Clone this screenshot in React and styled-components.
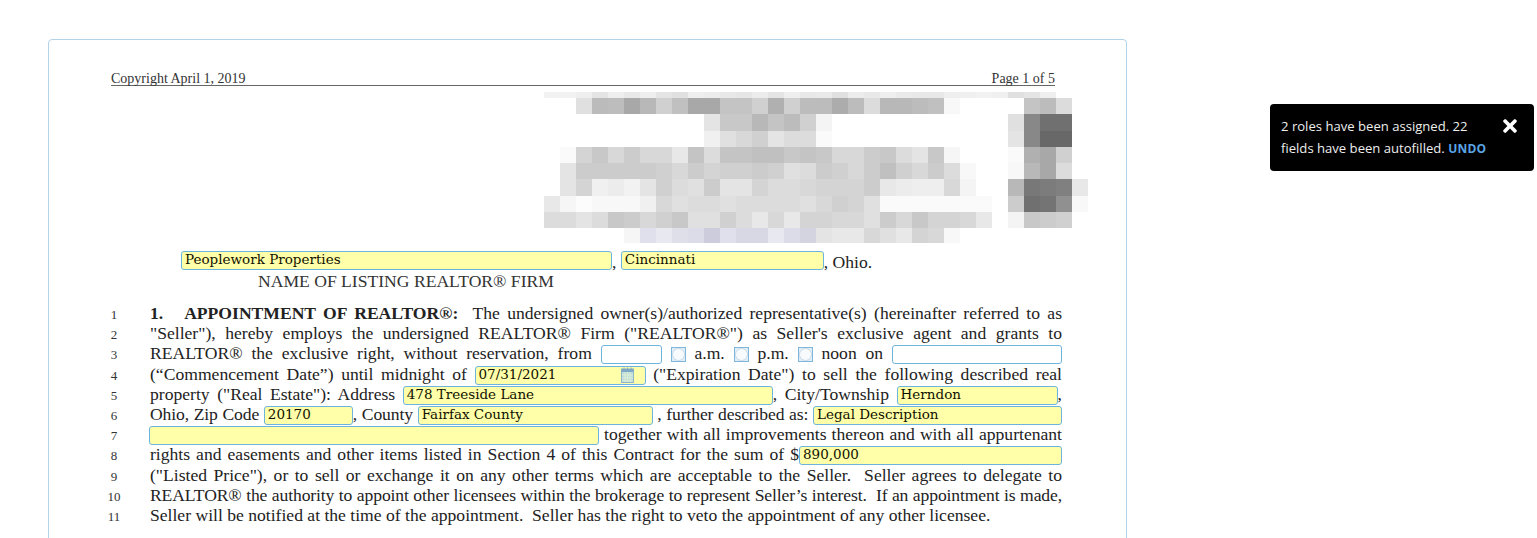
import React from "react";
import styled, { createGlobalStyle } from "styled-components";
import { FaTimes } from "react-icons/fa";

const Global = createGlobalStyle`
  html, body { margin: 0; padding: 0; background: #fff; height: 538px; overflow: hidden; }
`;

const Screen = styled.div`
  height: 538px;
  overflow: hidden;
  padding: 39px 0 0 48px;
  box-sizing: border-box;
  font-family: "Liberation Serif", serif;
  color: #222;
`;

const Sheet = styled.main`
  width: 1079px;
  height: 640px;
  box-sizing: border-box;
  border: 1px solid #b2d2ea;
  border-radius: 4px;
  padding: 28px 0 0 51px;
`;

const RunningHead = styled.header`
  display: flex;
  justify-content: space-between;
  width: 944px;
  height: 17px;
  margin-left: 11px;
  border-bottom: 1px solid #666;
  font-size: 14px;
  line-height: 22px;
  color: #333;
`;

const Mosaic = styled.svg`
  display: block;
  width: 562px;
  height: 159px;
  margin: 6px 0 0 428px;
`;

const FirmLine = styled.div`
  display: flex;
  align-items: flex-start;
  height: 20px;
  margin-left: 81px;
  font-size: 17.6px;
  line-height: 22px;
`;

const FirmCaption = styled.div`
  height: 20px;
  margin: 0 0 13px 158px;
  font-size: 17.6px;
  line-height: 20px;
  color: #333;
`;

const Row = styled.div`
  display: flex;
  height: 20.2px;
`;

const LineNumber = styled.span`
  flex: 0 0 28px;
  margin-right: 22px;
  text-align: center;
  font-size: 13px;
  line-height: 21px;
  color: #333;
`;

const Field = styled.span`
  display: inline-flex;
  align-items: center;
  justify-content: space-between;
  box-sizing: border-box;
  width: ${(p) => p.$w}px;
  height: 19px;
  margin-left: ${(p) => p.$ml || 0}px;
  padding: 0 3px 3px 3px;
  vertical-align: top;
  border: 1px solid #6db4dc;
  border-radius: 3px;
  background: ${(p) => (p.$empty ? "#fff" : "#feffa8")};
  font-family: "DejaVu Serif", serif;
  font-size: 13.5px;
  line-height: 14px;
  letter-spacing: normal;
  word-spacing: normal;
  color: #111100;
  text-align: left;
  text-align-last: left;
  white-space: nowrap;
`;

const RowText = styled.p`
  flex: 0 0 912px;
  width: 912px;
  margin: 0;
  font-size: 17.6px;
  line-height: 19.6px;
  height: 20.2px;
  letter-spacing: ${(p) => (p.$tight ? "-0.12px" : "normal")};
  word-spacing: ${(p) => (p.$tight ? "-1px" : "normal")};
  text-align: ${(p) => (p.$last ? "left" : "justify")};
  text-align-last: ${(p) => (p.$last ? "left" : "justify")};
  ${Field} {
    margin-top: 1px;
  }
`;

const Check = styled.span`
  display: inline-block;
  position: relative;
  box-sizing: border-box;
  width: 15px;
  height: 15px;
  margin-top: 3px;
  vertical-align: top;
  border: 1px solid #7fb6db;
  background: #e2eef7;
  &::after {
    content: "";
    position: absolute;
    inset: 0;
    border-radius: 50%;
    background: #f8fbfd;
    border: 1px solid #c8dae8;
    box-sizing: border-box;
  }
`;

const CalendarGlyph = styled.svg`
  width: 13px;
  height: 16px;
  flex: none;
  margin: 2px 8px 0 0;
`;

const Toast = styled.aside`
  position: fixed;
  top: 104px;
  left: 1270px;
  width: 264px;
  height: 67px;
  box-sizing: border-box;
  padding: 11px 40px 0 11px;
  background: #000;
  border-radius: 4px;
  color: #eee;
  font-family: "Open Sans", sans-serif;
  font-size: 13.1px;
  line-height: 22px;
`;

const Undo = styled.a`
  color: #5aa5e6;
  font-weight: 700;
  font-size: 12px;
  letter-spacing: 0.2px;
`;

const Close = styled.button`
  position: absolute;
  top: 12px;
  right: 14px;
  padding: 0;
  border: 0;
  background: none;
  color: #fff;
  display: flex;
`;

const mosaic = [
  [92, 5.5, 0, ["f2","f2","ee","e4","ee","e8","ee","e4","e0","ee","ec","e8","e6","ec","e4","ee","e8","ea","e0","ec","e8","ee","ea","e8","e8","ee","f0","f2","f0","e0","e4","ee"]],
  [98, 16, 2, ["e0","bb","bd","a8","b8","d0","c0","a8","a8","c4","c4","d0","b0","d0","bc","bc","ac","bc","dc","b8","b8","bc","c0","f8"]],
  [98, 16, 30, ["c4","bc","dc"]],
  [114, 16.5, 10, ["e4","c8","c8","b8","c4","bc","d0","f4"]],
  [114, 16.5, 29, ["e0","88","70","70"]],
  [130.5, 16.5, 10, ["f0","e0","d8","d0","e4","dc","dc","fa"]],
  [130.5, 16.5, 29, ["e4","88","68","68"]],
  [147, 16, 1, ["fa","d4","c8","d8","cc","d8","d8","e8","c4","dc","c4","c4","c0","c0","c8","c4","c8","d8","d8","cc","c8","dc","e4","c8","f6"]],
  [147, 16, 29, ["fa","b0","a8","d0"]],
  [163, 16, 1, ["e4","cc","cc","cc","cc","cc","d0","d8","cc","d4","d0","d0","cc","d0","e0","dc","cc","d0","d8","cc","c0","d0","d8","cc","dc","f8"]],
  [163, 16, 29, ["f8","b8","a8","dc"]],
  [179, 16.5, 1, ["e4","d4","f0","ec","f2","e4","d0","dc","e0","cc","e4","e4","d4","dc","dc","d8","d4","d4","d4","cc","e8","ec","ee","ee","d8","f4"]],
  [179, 16.5, 29, ["b8","78","7c","80","e8"]],
  [195.5, 16.5, 0, ["e8","f6","fc","f8","f8","f8","f0","d8","e0","dc","dc","e0","dc","dc","dc","dc","e0","d8","d0","d4","e0","fa","fa","fa","fa","fa","fa","fa"]],
  [195.5, 16.5, 29, ["cc","70","74","90","f8"]],
  [212, 16, 0, ["dc","dc","e4","dc","c8","cc","d8","d0","c8","e0","e0","d0","dc","e8","d8","e8","d4","d4","d8","d8","e0","cc","d8","c8","d4","d4","d8","e8"]],
  [212, 16, 29, ["f4","c8","cc","d0"]],
  [228, 15, 5, ["f6","e0e0ec","e8e8f0","dfdfe9","dcdce8","ccccdc","e0e0ec","d8d8e4","d8d8e4","e8e8f0","dcdce8","d4d4e0","e4","e8","e8","d8","e0","e8","d4","d8","f8"]],
];

const tone = (v) => (v.length === 2 ? `#${v}${v}${v}` : `#${v}`);

const Blur = () => (
  <Mosaic viewBox="528 92 562 159" shapeRendering="crispEdges" aria-hidden="true">
    {mosaic.flatMap(([y, h, start, cells], r) =>
      cells.map((c, i) => (
        <rect key={`${r}-${i}`} x={544 + (start + i) * 16} y={y} width="16" height={h} fill={tone(c)} />
      ))
    )}
  </Mosaic>
);

const Calendar = () => (
  <CalendarGlyph viewBox="0 0 13 16">
    <rect x="0.5" y="2" width="12" height="13.5" fill="#bcdce0" stroke="#8fb6c8" />
    <rect x="0.5" y="2" width="12" height="3" fill="#7fa8c4" />
    <path d="M3 0.5v3M6.5 0.5v3M10 0.5v3" stroke="#7fa8c4" />
    <path d="M1 8h11M1 11h11M1 14h11M4 5v10M6.5 5v10M9 5v10" stroke="#e6f2cf" strokeWidth="0.8" />
  </CalendarGlyph>
);

const lines = [
  { body: <><b>1.&nbsp;&nbsp; APPOINTMENT OF REALTOR®:</b>&nbsp; The undersigned owner(s)/authorized representative(s) (hereinafter referred to as</> },
  { body: <>"Seller"), hereby employs the undersigned REALTOR® Firm ("REALTOR®") as Seller's exclusive agent and grants to</> },
  { body: <>REALTOR® the exclusive right, without reservation, from <Field $w={61} $empty /> <Check /> a.m. <Check /> p.m. <Check /> noon on <Field $w={170} $empty /></> },
  { body: <>(“Commencement Date”) until midnight of <Field $w={171}>07/31/2021<Calendar /></Field> ("Expiration Date") to sell the following described real</> },
  { body: <>property ("Real Estate"): Address <Field $w={370}>478 Treeside Lane</Field>, City/Township <Field $w={161}>Herndon</Field>,</> },
  { tight: true, body: <>Ohio, Zip Code <Field $w={89}>20170</Field>, County <Field $w={235}>Fairfax County</Field> , further described as: <Field $w={249}>Legal Description</Field></> },
  { body: <><Field $w={450} $ml={-1} /> together with all improvements thereon and with all appurtenant</> },
  { body: <>rights and easements and other items listed in Section 4 of this Contract for the sum of $<Field $w={263}>890,000</Field></> },
  { body: <>("Listed Price"), or to sell or exchange it on any other terms which are acceptable to the Seller.&nbsp; Seller agrees to delegate to</> },
  { tight: true, body: <>REALTOR® the authority to appoint other licensees within the brokerage to represent Seller’s interest.&nbsp; If an appointment is made,</> },
  { last: true, body: <>Seller will be notified at the time of the appointment.&nbsp; Seller has the right to veto the appointment of any other licensee.</> },
];

export default function App() {
  return (
    <>
      <Global />
      <Screen>
        <Sheet>
          <RunningHead>
            <span>Copyright April 1, 2019</span>
            <span>Page 1 of 5</span>
          </RunningHead>
          <Blur />
          <FirmLine>
            <Field $w={431}>Peoplework Properties</Field>
            <span>,&nbsp;</span>
            <Field $w={203}>Cincinnati</Field>
            <span>, Ohio.</span>
          </FirmLine>
          <FirmCaption>NAME OF LISTING REALTOR® FIRM</FirmCaption>
          {lines.map((line, i) => (
            <Row key={i}>
              <LineNumber>{i + 1}</LineNumber>
              <RowText $last={line.last} $tight={line.tight}>{line.body}</RowText>
            </Row>
          ))}
        </Sheet>
      </Screen>
      <Toast>
        2 roles have been assigned. 22 fields have been autofilled. <Undo>UNDO</Undo>
        <Close aria-label="Dismiss"><FaTimes size={20} /></Close>
      </Toast>
    </>
  );
}
